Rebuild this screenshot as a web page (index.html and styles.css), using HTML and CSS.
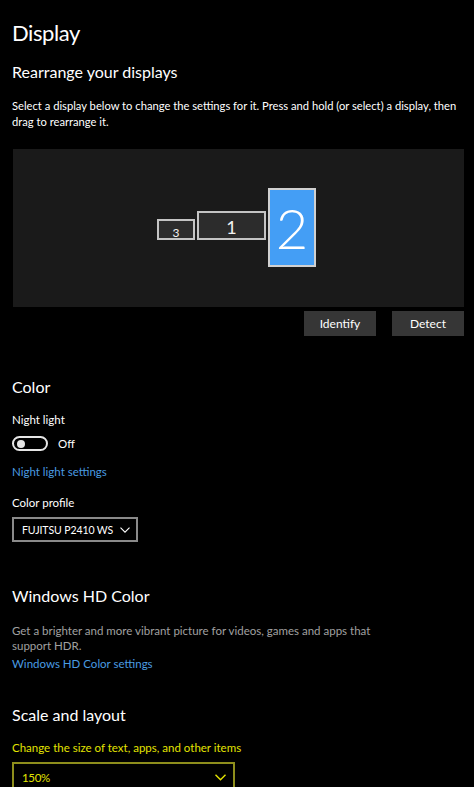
FILE: index.html
```html
<!DOCTYPE html>
<html lang="en">
<head>
<meta charset="utf-8">
<title>Display</title>
<link rel="stylesheet" href="styles.css">
</head>
<body>
<main class="page">
  <h1 class="title">Display</h1>

  <h2 class="section section-first">Rearrange your displays</h2>
  <p class="desc">Select a display below to change the settings for it. Press and hold (or select) a display, then drag to rearrange it.</p>

  <div class="arrange">
    <div class="monitor m3"><span>3</span></div>
    <div class="monitor m1"><span>1</span></div>
    <div class="monitor m2 selected"><span>2</span></div>
  </div>

  <div class="actions">
    <button class="btn">Identify</button>
    <button class="btn">Detect</button>
  </div>

  <h2 class="section section-color">Color</h2>
  <div class="label label-night">Night light</div>
  <div class="toggle-row">
    <span class="toggle"><span class="knob"></span></span>
    <span class="toggle-state">Off</span>
  </div>
  <a class="link link-night">Night light settings</a>

  <div class="label label-profile">Color profile</div>
  <div class="select select-profile">
    <span class="select-value">FUJITSU P2410 WS</span>
    <svg class="chevron" width="10" height="6" viewBox="0 0 10 6"><path d="M0.5 0.6 L5 5.1 L9.5 0.6" fill="none" stroke="currentColor" stroke-width="1.1"/></svg>
  </div>

  <h2 class="section section-hd">Windows HD Color</h2>
  <p class="muted">Get a brighter and more vibrant picture for videos, games and apps that support HDR.</p>
  <a class="link link-hd">Windows HD Color settings</a>

  <h2 class="section section-scale">Scale and layout</h2>
  <div class="label label-scale">Change the size of text, apps, and other items</div>
  <div class="select select-scale">
    <span class="select-value">150%</span>
    <svg class="chevron" width="11" height="7" viewBox="0 0 11 7"><path d="M0.5 0.8 L5.5 5.8 L10.5 0.8" fill="none" stroke="currentColor" stroke-width="1.4"/></svg>
  </div>
</main>
</body>
</html>
```

FILE: styles.css
```css
html, body {
  margin: 0;
  padding: 0;
  background: #000;
  color: #fff;
  font-family: Lato, "Noto Sans", sans-serif;
  overflow: hidden;
}

.page {
  padding: 17px 10px 0 12px;
  display: flex;
  flex-direction: column;
  align-items: flex-start;
}

.title {
  margin: 0;
  font-size: 22px;
  line-height: 32px;
  font-weight: 400;
  letter-spacing: -0.4px;
}

.section {
  margin: 0;
  font-size: 16px;
  line-height: 22px;
  font-weight: 400;
}

.section-first { margin-top: 12px; }
.section-color { margin-top: 40px; }
.section-hd { margin-top: 43px; }
.section-scale { margin-top: 32px; }

.desc {
  margin: 15px 0 0;
  font-size: 11.2px;
  line-height: 16px;
}

/* display arrangement canvas: monitors sit at their desktop coordinates */
.arrange {
  position: relative;
  margin: 19px 0 0 1px;
  width: 451px;
  height: 158px;
  background: #1a1a1a;
}

.monitor {
  position: absolute;
  box-sizing: border-box;
  border: 2px solid #c4c4c4;
  background: #2c2c2c;
  display: flex;
  align-items: center;
  justify-content: center;
  color: #f2f2f2;
}

.m3 { left: 144px; top: 70px; width: 38px; height: 21px; font-size: 12px; padding-top: 5px; }
.m1 { left: 184px; top: 62px; width: 69px; height: 29px; font-size: 18px; padding-top: 3px; }
.m2 { left: 255px; top: 39px; width: 48px; height: 79px; font-size: 56px; font-weight: 300; }
.m2.selected { background: #449ef5; border-color: #d0d0d0; color: #fff; }

.actions {
  align-self: stretch;
  display: flex;
  justify-content: flex-end;
  gap: 16px;
  margin-top: 4px;
}

.btn {
  width: 72px;
  height: 25px;
  border: 0;
  padding: 0;
  background: #363636;
  color: #fff;
  font-family: inherit;
  font-size: 12px;
}

.label {
  font-size: 11.5px;
  line-height: 16px;
}

.label-night { margin-top: 14px; }
.label-profile { margin-top: 15px; }
.label-scale { margin-top: 14px; color: #e3e300; }

.toggle-row {
  display: flex;
  align-items: center;
  gap: 10px;
  margin-top: 8px;
  height: 15px;
}

.toggle {
  box-sizing: border-box;
  width: 36px;
  height: 15px;
  border: 2px solid #e6e6e6;
  border-radius: 8px;
  display: flex;
  align-items: center;
  padding-left: 3px;
}

.knob {
  width: 8px;
  height: 8px;
  border-radius: 50%;
  background: #e6e6e6;
}

.toggle-state {
  font-size: 11.5px;
  line-height: 16px;
}

.link {
  color: #4a9ce2;
  font-size: 11.5px;
  line-height: 16px;
}

.link-night { margin-top: 13px; }
.link-hd { margin-top: 3px; }

.select {
  box-sizing: border-box;
  display: flex;
  align-items: center;
  justify-content: space-between;
  margin-top: 6px;
  font-size: 11.5px;
  white-space: nowrap;
}

.select-profile {
  width: 126px;
  height: 25px;
  border: 2px solid #8a8a8a;
  padding: 0 6px 0 8px;
}

.select-profile .select-value {
  font-size: 10.5px;
  letter-spacing: -0.1px;
}

.select-scale {
  width: 223px;
  height: 30px;
  border: 2px solid #8e8e1c;
  padding: 0 7px 0 8px;
  color: #e3e300;
}

.select-scale .select-value { letter-spacing: -0.3px; }

.chevron { display: block; flex: none; }

.muted {
  margin: 16px 0 0;
  width: 380px;
  font-size: 11.5px;
  line-height: 15px;
  color: #a0a0a0;
}
```
